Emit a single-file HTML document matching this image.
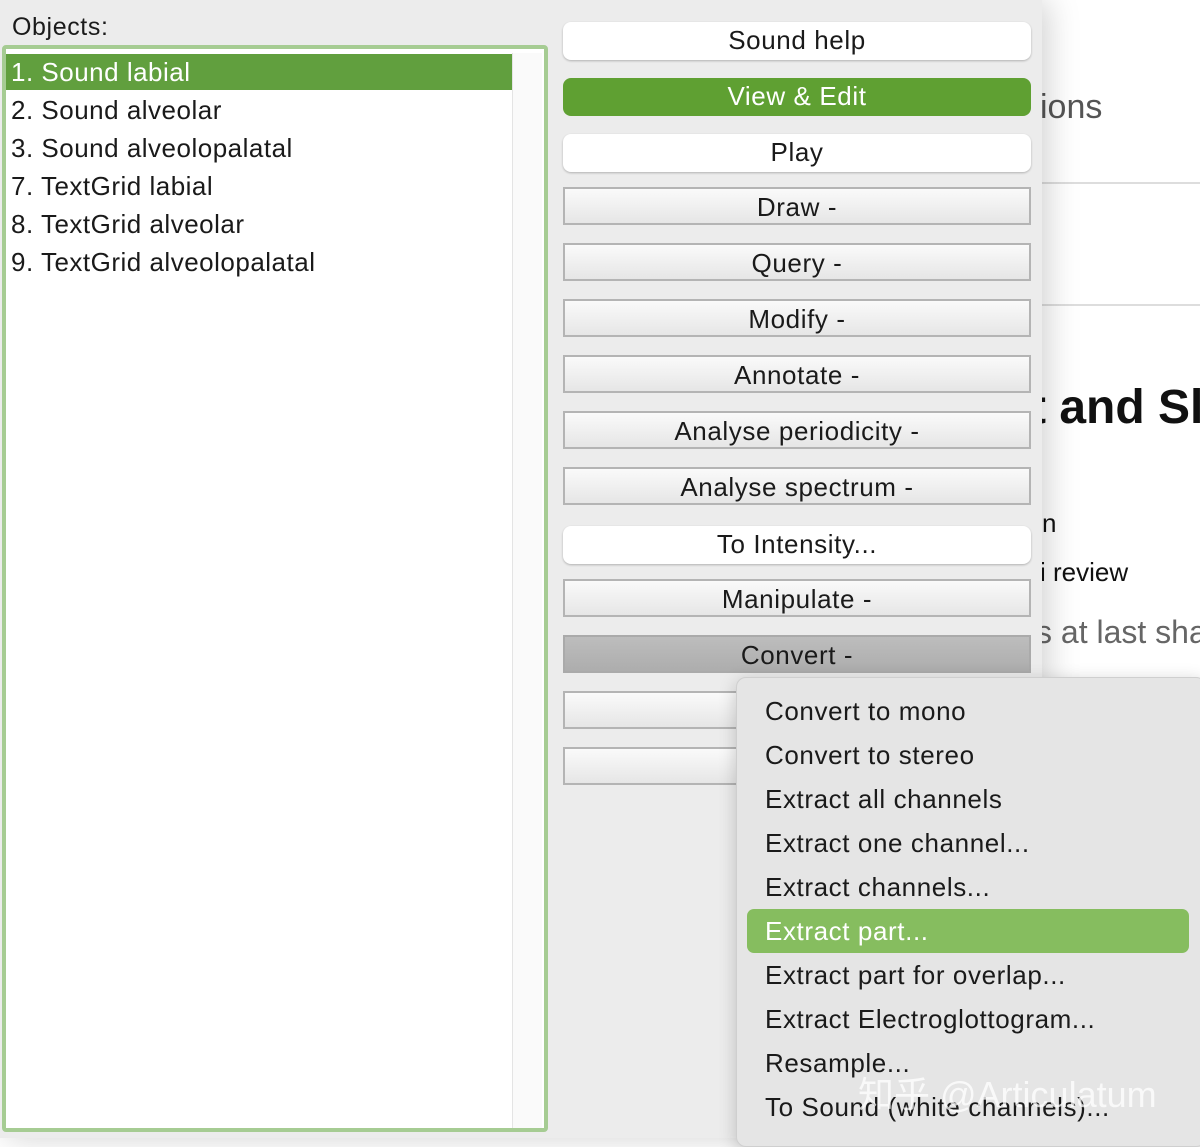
<!DOCTYPE html>
<html><head><style>
*{margin:0;padding:0;box-sizing:border-box}
body{width:1200px;height:1138px;overflow:hidden;position:relative;background:#fff;font-family:"Liberation Sans",sans-serif;color:#1a1a1a}
.bgtxt{position:absolute;font-family:"Liberation Sans",sans-serif;white-space:nowrap}
.win{position:absolute;left:0;top:0;width:1042px;height:1138px;background:#ececec;box-shadow:6px 0 30px rgba(0,0,0,.18)}
.lbl{position:absolute;left:12px;top:13px;font-size:25px;letter-spacing:.6px}
.frame{position:absolute;left:2px;top:45px;width:546px;height:1087px;border:4px solid #a6cc93;border-radius:4px;background:#fff}
.sb{position:absolute;left:506px;top:4px;width:30px;height:1075px;background:#fafafa;border-left:1px solid #e4e4e4}
.row{position:absolute;left:0;width:506px;height:36px;font-size:26px;letter-spacing:.5px;line-height:36px;padding-left:5px;white-space:nowrap}
.sel{background:#619f3e;color:#fff}
.btn{position:absolute;left:563px;width:468px;height:38px;font-size:26px;letter-spacing:.6px;line-height:36px;text-align:center;white-space:nowrap}
.r{background:#fff;border-radius:8px;box-shadow:0 1px 2px rgba(0,0,0,.25)}
.g{background:#5fa032;color:#fff;border-radius:8px}
.s{background:linear-gradient(#fafafa,#e6e6e6);border:2px solid #b4b4b4}
.c{background:linear-gradient(#bdbdbd,#adadad);border:2px solid #aaa}
.menu{position:absolute;left:736px;top:677px;width:470px;height:470px;background:#e5e5e5;border:1px solid #cfcfcf;border-radius:10px;box-shadow:0 4px 18px rgba(0,0,0,.2)}
.mi{position:absolute;left:28px;font-size:26px;letter-spacing:.6px;height:44px;line-height:44px;white-space:nowrap}
.hl{position:absolute;left:10px;top:231px;width:442px;height:44px;background:#86bd5f;border-radius:7px}
</style></head><body>
<div class="bgtxt" style="left:1040px;top:88px;font-size:34px;color:#555">ions</div>
<div style="position:absolute;left:1042px;top:182px;width:158px;height:2px;background:#ddd"></div>
<div style="position:absolute;left:1042px;top:304px;width:158px;height:2px;background:#ddd"></div>
<div class="bgtxt" style="left:1030px;top:380px;font-size:48px;font-weight:bold;color:#111">t and Sl</div>
<div class="bgtxt" style="left:1042px;top:508px;font-size:26px;color:#111">n</div>
<div class="bgtxt" style="left:1040px;top:557px;font-size:26px;color:#111">i review</div>
<div class="bgtxt" style="left:1036px;top:614px;font-size:32px;color:#666">s at last sha</div>
<div class="win">
<div class="lbl">Objects:</div>
<div class="frame"><div class="sb"></div>
<div class="row sel" style="top:5px">1. Sound labial</div>
<div class="row" style="top:43px">2. Sound alveolar</div>
<div class="row" style="top:81px">3. Sound alveolopalatal</div>
<div class="row" style="top:119px">7. TextGrid labial</div>
<div class="row" style="top:157px">8. TextGrid alveolar</div>
<div class="row" style="top:195px">9. TextGrid alveolopalatal</div>
</div>
<div class="btn r" style="top:22px">Sound help</div>
<div class="btn g" style="top:78px">View &amp; Edit</div>
<div class="btn r" style="top:134px">Play</div>
<div class="btn s" style="top:187px">Draw -</div>
<div class="btn s" style="top:243px">Query -</div>
<div class="btn s" style="top:299px">Modify -</div>
<div class="btn s" style="top:355px">Annotate -</div>
<div class="btn s" style="top:411px">Analyse periodicity -</div>
<div class="btn s" style="top:467px">Analyse spectrum -</div>
<div class="btn r" style="top:526px">To Intensity...</div>
<div class="btn s" style="top:579px">Manipulate -</div>
<div class="btn c" style="top:635px">Convert -</div>
<div class="btn s" style="top:691px"></div>
<div class="btn s" style="top:747px"></div>
</div>
<div class="menu">
<div class="hl"></div>
<div class="mi" style="top:11px">Convert to mono</div>
<div class="mi" style="top:55px">Convert to stereo</div>
<div class="mi" style="top:99px">Extract all channels</div>
<div class="mi" style="top:143px">Extract one channel...</div>
<div class="mi" style="top:187px">Extract channels...</div>
<div class="mi" style="top:231px;color:#fff">Extract part...</div>
<div class="mi" style="top:275px">Extract part for overlap...</div>
<div class="mi" style="top:319px">Extract Electroglottogram...</div>
<div class="mi" style="top:363px">Resample...</div>
<div class="mi" style="top:407px">To Sound (white channels)...</div>
</div>
<div class="bgtxt" style="left:858px;top:1066px;font-size:36px;color:rgba(255,255,255,.75);font-family:'Liberation Sans','Noto Sans CJK SC',sans-serif">知乎 @Articulatum</div>
</body></html>
